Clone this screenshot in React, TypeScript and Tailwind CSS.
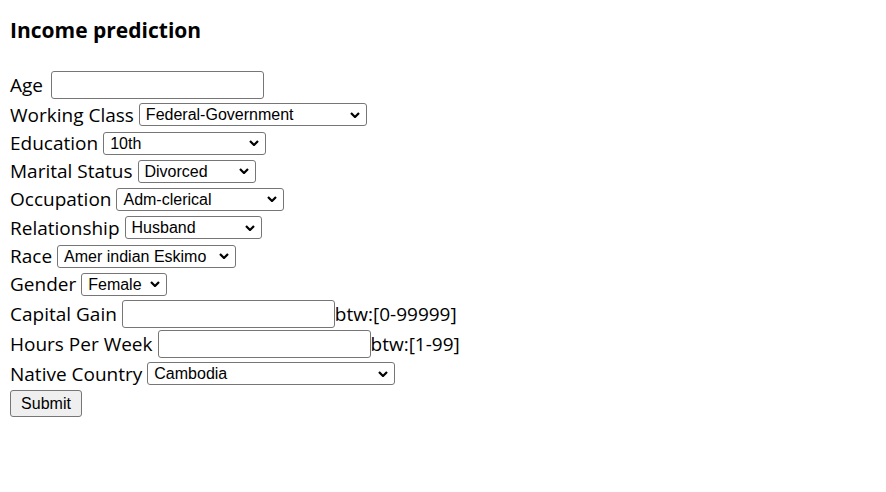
import { ReactNode } from "react";

const labelFont = "font-['Open_Sans','Noto_Sans',sans-serif]";

function Chevron() {
    return (
        <svg
            viewBox="0 0 10 6"
            className="pointer-events-none absolute right-[7px] top-1/2 h-[6px] w-[10px] -translate-y-1/2"
        >
            <path d="M1 1 L5 5 L9 1" fill="none" stroke="#000" strokeWidth="2.2" />
        </svg>
    );
}

function Select({ width, options }: { width: string; options: string[] }) {
    return (
        <span className="relative ml-[5px] inline-flex">
            <select
                className={`${width} h-[23px] appearance-none rounded-[3px] border border-[#767676] bg-white pl-[6px] font-['Liberation_Sans',Arial,sans-serif] text-[16px] leading-[19px] text-black outline-none`}
            >
                {options.map((o) => (
                    <option key={o}>{o}</option>
                ))}
            </select>
            <Chevron />
        </span>
    );
}

function TextInput({ width, className = "" }: { width: string; className?: string }) {
    return (
        <input
            type="text"
            className={`${width} h-[28px] rounded-[3px] border border-[#767676] bg-white outline-none ${className}`}
        />
    );
}

function Row({ h, children }: { h: string; children: ReactNode }) {
    return <div className={`flex items-center ${h}`}>{children}</div>;
}

export default function App() {
    return (
        <div className={`min-h-[492px] w-[886px] bg-white pl-[10px] text-black ${labelFont}`}>
            <h2 className="pt-[15px] pb-[24px] text-[21px] font-bold leading-[30px]">Income prediction</h2>
            <form className="text-[19px] leading-[28px]" onSubmit={(e) => e.preventDefault()}>
                <Row h="h-[31px]">
                    <span>Age</span>
                    <TextInput width="w-[213px]" className="ml-[8px]" />
                </Row>
                <Row h="h-[29px]">
                    <span>Working Class</span>
                    <Select width="w-[228px]" options={["Federal-Government", "Local-Government", "Private", "Self-Employed", "State-Government"]} />
                </Row>
                <Row h="h-[28px]">
                    <span>Education</span>
                    <Select width="w-[163px]" options={["10th", "11th", "12th", "Bachelors", "Masters", "Doctorate"]} />
                </Row>
                <Row h="h-[28px]">
                    <span>Marital Status</span>
                    <Select width="w-[118px]" options={["Divorced", "Married", "Never-married", "Separated", "Widowed"]} />
                </Row>
                <Row h="h-[28px]">
                    <span>Occupation</span>
                    <Select width="w-[168px]" options={["Adm-clerical", "Craft-repair", "Exec-managerial", "Sales", "Tech-support"]} />
                </Row>
                <Row h="h-[29px]">
                    <span>Relationship</span>
                    <Select width="w-[137px]" options={["Husband", "Not-in-family", "Own-child", "Unmarried", "Wife"]} />
                </Row>
                <Row h="h-[28px]">
                    <span>Race</span>
                    <Select width="w-[179px]" options={["Amer indian Eskimo", "Asian Pac Islander", "Black", "Other", "White"]} />
                </Row>
                <Row h="h-[28px]">
                    <span>Gender</span>
                    <Select width="w-[86px]" options={["Female", "Male"]} />
                </Row>
                <Row h="h-[31px]">
                    <span>Capital Gain</span>
                    <TextInput width="w-[213px]" className="ml-[5px]" />
                    <span>btw:[0-99999]</span>
                </Row>
                <Row h="h-[29px]">
                    <span>Hours Per Week</span>
                    <TextInput width="w-[213px]" className="ml-[5px]" />
                    <span>btw:[1-99]</span>
                </Row>
                <Row h="h-[31px]">
                    <span>Native Country</span>
                    <Select width="w-[248px]" options={["Cambodia", "Canada", "China", "India", "United-States"]} />
                </Row>
                <div className="flex h-[28px] items-center">
                    <button
                        type="submit"
                        className="h-[27px] w-[72px] rounded-[3px] border border-[#767676] bg-[#efefef] font-['Liberation_Sans',Arial,sans-serif] text-[16px] leading-[19px] text-black"
                    >
                        Submit
                    </button>
                </div>
            </form>
        </div>
    );
}
